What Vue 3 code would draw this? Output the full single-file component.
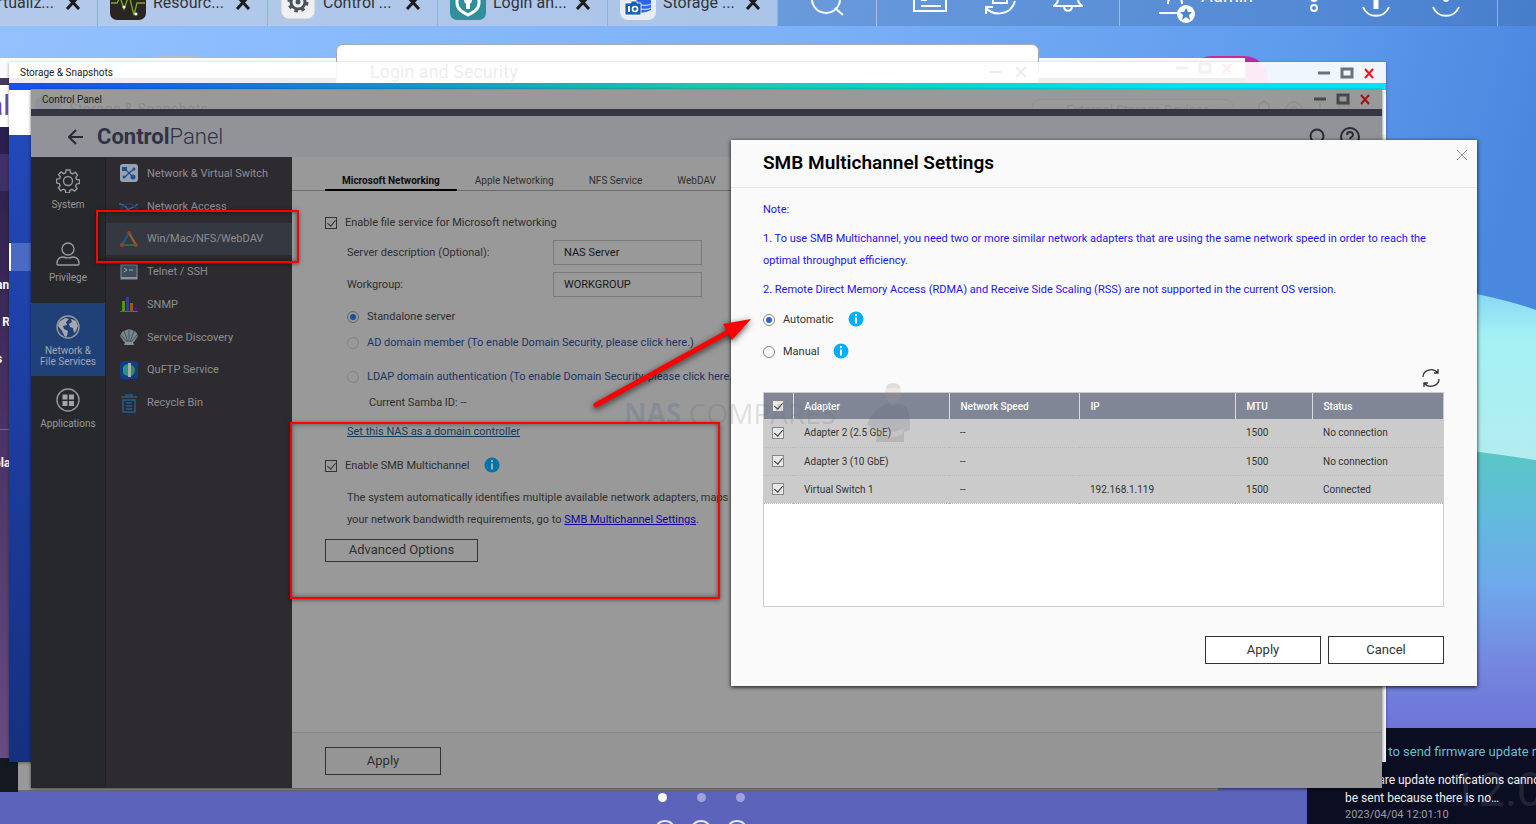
<template>
  <div class="desktop">
    <!-- Wallpaper -->
    <svg class="wallpaper" viewBox="0 0 1536 824" preserveAspectRatio="none" aria-hidden="true">
      <defs>
        <linearGradient id="sky" x1="0" y1="0" x2="1" y2="0.15">
          <stop offset="0" stop-color="#93c1ff" />
          <stop offset="0.5" stop-color="#7db2f8" />
          <stop offset="0.85" stop-color="#5d9aec" />
          <stop offset="1" stop-color="#4a87df" />
        </linearGradient>
        <linearGradient id="ice" x1="0" y1="0" x2="0" y2="1">
          <stop offset="0" stop-color="#7fd0f4" />
          <stop offset="0.3" stop-color="#a4f1f4" />
          <stop offset="1" stop-color="#b4ecef" />
        </linearGradient>
        <linearGradient id="sea" x1="0" y1="0" x2="0" y2="1">
          <stop offset="0" stop-color="#57c9c2" />
          <stop offset="0.2" stop-color="#62bbdc" />
          <stop offset="0.38" stop-color="#6fa8ec" />
          <stop offset="0.6" stop-color="#7585de" />
          <stop offset="0.8" stop-color="#6a70d4" />
          <stop offset="1" stop-color="#5f63c3" />
        </linearGradient>
      </defs>
      <rect width="1536" height="824" fill="url(#sky)" />
      <path d="M1380 280 Q1480 290 1536 310 V470 H1380Z" fill="url(#ice)" />
      <path d="M0 440 H1380 Q1470 450 1536 460 V824 H0Z" fill="url(#sea)" />
      <path d="M0 780 H1310 V824 H0Z" fill="#5c63ba" />
    </svg>
    <div class="shortcut shortcut-gray"></div>
    <div class="shortcut shortcut-pink"></div>

    <!-- Task bar -->
    <header class="taskbar">
      <div class="task" v-for="t in tasks" :key="t.name">
        <svg class="task-icon" viewBox="0 0 36 36" aria-hidden="true">
          <template v-if="t.icon === 'monitor'">
            <rect width="36" height="36" rx="7" fill="#2a2422" />
            <path d="M1 19h6l3-6 4 12 5-14 5 20 3-12h8" fill="none" stroke="#79a829" stroke-width="1.3" />
            <circle cx="14" cy="23" r="1.5" fill="#fff" />
            <circle cx="26" cy="30" r="1.5" fill="#fff" />
          </template>
          <template v-else-if="t.icon === 'gear'">
            <rect x="1" y="1" width="34" height="34" rx="8" fill="#eef0f3" stroke="#c9c9c9" />
            <circle cx="18" cy="18" r="7" fill="none" stroke="#4b525d" stroke-width="3" />
            <circle cx="18" cy="18" r="9" fill="none" stroke="#4b525d" stroke-width="3" stroke-dasharray="3.5 3.57" />
            <circle cx="18" cy="18" r="2.5" fill="#4b525d" />
          </template>
          <template v-else-if="t.icon === 'shield'">
            <rect width="36" height="36" rx="7" fill="#2f8f9b" />
            <path d="M18 4l11 3v12c0 6-5 9-11 12-6-3-11-6-11-12V7z" fill="none" stroke="#fff" stroke-width="3" />
            <circle cx="18" cy="16" r="4" fill="#fff" />
            <path d="M16 16h4v9h-4z" fill="#fff" />
          </template>
          <template v-else-if="t.icon === 'storage'">
            <rect width="36" height="36" rx="8" fill="#e8ecf2" />
            <path d="M16 2h15v24q-7 4-15 2z" fill="#2d63e8" />
            <path d="M18 20q7 3 13 0M18 24q7 3 13 0" fill="none" stroke="#a9d0ff" stroke-width="1.3" />
            <path d="M5 19h6v-2h6v2h4v12H5z" fill="#1261b5" stroke="#fff" stroke-width="0.8" />
            <path d="M9 22v6" stroke="#fff" stroke-width="2" />
            <circle cx="15" cy="25" r="2.5" fill="none" stroke="#fff" stroke-width="1.7" />
          </template>
        </svg>
        <span class="task-name">{{ t.name }}</span>
        <button class="plain" aria-label="Close">
          <svg width="16" height="16" viewBox="0 0 16 16"><path d="M2 2l12 13M14 2L2 15" stroke="#1c1c1c" stroke-width="3" /></svg>
        </button>
      </div>
      <nav class="tray">
        <button class="plain tray-search" aria-label="Search">
          <svg width="36" height="32" viewBox="0 0 36 32"><circle cx="17" cy="13" r="14" /><path d="M26 22l8 7" /></svg>
        </button>
        <i class="tray-line"></i>
        <div class="tray-group">
          <button class="plain" aria-label="Tasks">
            <svg width="34" height="24" viewBox="0 0 34 24"><path d="M1 0v22h32V0M8 11h6M8 17h20" /></svg>
          </button>
          <button class="plain" aria-label="Backup">
            <svg width="34" height="26" viewBox="0 0 34 26"><path d="M3 25v-7h7M3 19c7 8 25 8 29-7M10 8v6h14V8M13 10h6" /></svg>
          </button>
          <button class="plain" aria-label="Notifications">
            <svg width="30" height="24" viewBox="0 0 30 24"><path d="M5 8c0 6-1 6-4 9h28c-3-3-4-3-4-9M11 18c1 5 7 5 8 0" /></svg>
          </button>
        </div>
        <i class="tray-line"></i>
        <button class="plain user">
          <svg width="40" height="42" viewBox="0 0 40 42">
            <path d="M0 18q2-3 4-3M12 23q0-8 7-8t7 8M3 32h18" />
            <circle cx="30" cy="33" r="9" fill="#fff" stroke="none" />
            <path d="M30 27l2 4h4l-3 3 1 5-4-3-4 3 1-5-3-3h4z" fill="#4b85d0" stroke="none" />
          </svg>
          <span>Admin</span>
        </button>
        <button class="plain more" aria-label="More">
          <svg width="10" height="22" viewBox="0 0 10 22"><circle cx="5" cy="7" r="3" /><circle cx="5" cy="17" r="3" /></svg>
        </button>
        <button class="plain round" aria-label="Information">
          <svg width="30" height="30" viewBox="0 0 30 30"><path d="M2 20a14 14 0 0 0 26 0" /><path d="M15 8v14" stroke-width="5" /></svg>
        </button>
        <button class="plain round" aria-label="Dashboard">
          <svg width="30" height="30" viewBox="0 0 30 30"><path d="M2 20a14 14 0 0 0 26 0" /><circle cx="15" cy="12" r="2" fill="#fff" /></svg>
        </button>
        <i class="tray-line"></i>
      </nav>
    </header>

    <!-- Windows in the background -->
    <section class="back-window">
      <div class="back-title"><WindowButtons /></div>
      <div class="back-logo">al</div>
      <div class="back-side"><span>an</span><span>l R</span><span>s</span></div>
      <div class="back-side-low"><span>plan</span></div>
      <div class="back-foot"></div>
    </section>
    <section class="shade-window"></section>
    <section class="login-window">
      <h2>Login and Security</h2>
      <svg width="40" height="14" viewBox="0 0 40 14" aria-hidden="true"><path d="M1 7h13M28 2l10 10M38 2L28 12" /></svg>
    </section>

    <section class="notice">
      <span class="clock">12:01</span>
      <strong>Unable to send firmware update n</strong>
      <p>Firmware update notifications cannot<br>be sent because there is no…</p>
      <time>2023/04/04 12:01:10</time>
    </section>

    <footer class="pager">
      <div class="dots"><i class="on"></i><i></i><i></i></div>
      <div class="rings"><i></i><i></i><i></i></div>
    </footer>

    <!-- Storage & Snapshots -->
    <section class="storage-window">
      <div class="titlebar storage-title">
        <span>Storage &amp; Snapshots</span>
        <WindowButtons />
      </div>
      <div class="rainbow"></div>
      <div class="storage-head">
        <i class="disk"></i>
        <h2>Storage &amp; Snapshots</h2>
        <span class="device">External Storage Devices</span>
        <svg width="110" height="24" viewBox="0 0 110 24" aria-hidden="true">
          <path d="M17 8l5-4 5 4v12H17zM98 4l4 5 6-3-3 7 3 6H96zM78 4v18" /><circle cx="52" cy="13" r="8" /><circle cx="52" cy="13" r="3" />
        </svg>
      </div>
      <div class="storage-side"><i></i></div>
    </section>

    <!-- Control Panel -->
    <section class="panel">
      <div class="titlebar panel-title">
        <span>Control Panel</span>
        <WindowButtons />
      </div>
      <div class="panel-head">
        <button class="plain" aria-label="Back">
          <svg width="16" height="16" viewBox="0 0 16 16"><path d="M15 8H2M8 1L1 8l7 7" /></svg>
        </button>
        <h1><b>Control</b>Panel</h1>
        <button class="plain" aria-label="Search">
          <svg width="18" height="18" viewBox="0 0 18 18"><circle cx="8" cy="8" r="6.5" /><path d="M12 12l5 5" /></svg>
        </button>
        <button class="plain" aria-label="Help">
          <svg width="20" height="20" viewBox="0 0 20 20"><circle cx="10" cy="10" r="9" /><path d="M7 8c0-4 6-4 6 0 0 2-3 2-3 4M10 14v2" /></svg>
        </button>
      </div>
      <div class="panel-body">
        <nav class="groups">
          <a v-for="g in groups" :key="g.icon" href="#" :class="{ active: g.icon === 'globe' }">
            <svg width="24" height="24" viewBox="0 0 24 24" aria-hidden="true">
              <template v-if="g.icon === 'gear'">
                <path d="M10 1h4l.6 3 2 .9L19.300 3.200 21.500 6l-1.700 2.500.7 2 3 .5v3.500l-3 .6-1 2 1.600 2.500-2.600 2.500-2.500-1.700-2 .9-.6 2.700h-3.500l-.7-3-2-.8-2.500 1.600L2.500 19l1.600-2.500-.8-2-2.800-.6v-3.500l3-.7.8-2L2.500 5.500 5 3l2.500 1.700 2-.8z" />
                <circle cx="12" cy="12" r="4.500" />
              </template>
              <template v-else-if="g.icon === 'user'">
                <circle cx="12" cy="7" r="6" />
                <path d="M1 22c0-5 3-7 6-7 3 1 7 1 10 0 3 0 6 2 6 7q0 1-1 1H2q-1 0-1-1z" />
              </template>
              <template v-else-if="g.icon === 'globe'">
                <circle cx="12" cy="12" r="11" />
                <path d="M3 7l6-4 4 1-3 3 1 3-4 1 1 3 4 2-1 5-2 1-3-6-4-5zM15 4l5 2 2 5-2 5-2 2-1-5-3-1-1-3 3-2z" fill="#a5a8ae" stroke="none" />
              </template>
              <template v-else>
                <circle cx="12" cy="12" r="11" />
                <path d="M6.500 6.500h5v5h-5zM13 6.500h5v5h-5zM6.500 13h5v5h-5zM13 13h5v5h-5z" fill="#a4a4a6" stroke="none" />
              </template>
            </svg>
            <span>{{ g.name }}</span>
          </a>
        </nav>
        <nav class="services">
          <a v-for="s in services" :key="s.name" href="#" :class="{ active: s.icon === 'share' }">
            <svg width="20" height="20" viewBox="0 0 20 20" aria-hidden="true">
              <template v-if="s.icon === 'switch'">
                <rect x="1" y="1" width="18" height="18" rx="3" fill="#98a1ae" />
                <path d="M6 6l8 8M6 14l4-4M15 6l-5 4" stroke="#1f4f96" stroke-width="1.200" />
                <path d="M3 4h5v4H3z" fill="#1f4f96" /><circle cx="14" cy="14" r="2.500" fill="#1f4f96" /><circle cx="5" cy="14" r="1.500" fill="#1f4f96" /><circle cx="15" cy="6" r="1.500" fill="#1f4f96" />
              </template>
              <template v-else-if="s.icon === 'access'">
                <path d="M0 8q6 0 10 7M0 15Q10 15 19 8" fill="none" stroke="#2d6d8b" stroke-width="1.500" />
                <path d="M1 14Q8 5 14 9l5 5" fill="none" stroke="#353675" stroke-width="1.500" />
              </template>
              <template v-else-if="s.icon === 'share'">
                <path d="M10 4L3 16" stroke="#205891" stroke-width="2" /><path d="M10 4l7 12" stroke="#98661e" stroke-width="2" /><path d="M3 16h14" stroke="#2e6544" stroke-width="2" />
                <circle cx="10" cy="4" r="2" fill="#98412c" /><circle cx="3" cy="16" r="2" fill="#98412c" /><circle cx="17" cy="16" r="2" fill="#98412c" />
              </template>
              <template v-else-if="s.icon === 'terminal'">
                <rect x="2" y="3" width="16" height="14" fill="#3d4d5c" stroke="#7c8d9c" /><path d="M5 6l3 2-3 2M10 8h4" fill="none" stroke="#a0a8b0" /><path d="M2 15h16v2H2z" fill="#87929b" />
              </template>
              <template v-else-if="s.icon === 'bars'">
                <path d="M3 7h3v10H3z" fill="#539700" /><path d="M7 3h3v14H7z" fill="#303f99" /><path d="M11 9h3v8h-3z" fill="#985d00" /><path d="M15 13h3v4h-3z" fill="#551296" /><path d="M1 17h18v1H1z" fill="#666" />
              </template>
              <template v-else-if="s.icon === 'shell'">
                <path d="M1 9l2-4 4-2 3-1 3 1 4 2 2 4-4 6H5z" fill="#75878d" /><path d="M10 2v13M5 4l4 11M15 4l-4 11M2 8l6 7M18 8l-6 7" stroke="#47575f" /><path d="M6 15h8l1 3H5z" fill="#839095" />
              </template>
              <template v-else-if="s.icon === 'ftp'">
                <rect x="1" y="1" width="18" height="18" rx="3" fill="#123d80" /><path d="M4 7q2-3 5-3v12q-3 0-5-3z" fill="#299291" /><path d="M9 3h3v14H9z" fill="#9eb2a9" /><path d="M12 5q4 1 4 5t-4 6z" fill="#328b65" />
              </template>
              <template v-else>
                <path d="M2 4h16M7 4V2h6v2M4 7v12h12V7zM7 10h6M7 13h6M7 16h6" fill="none" stroke="#245d87" stroke-width="1.500" />
              </template>
            </svg>
            <span>{{ s.name }}</span>
          </a>
        </nav>
        <main class="content">
          <div class="tabs" role="tablist">
            <button v-for="(t, i) in tabs" :key="t" class="tab" :class="{ active: i === 0 }" role="tab">{{ t }}</button>
          </div>
          <form class="form" @submit.prevent>
            <label class="line"><input v-model="fileService" type="checkbox">Enable file service for Microsoft networking</label>
            <div class="field">
              <label for="desc">Server description (Optional):</label>
              <input id="desc" v-model="description" type="text">
            </div>
            <div class="field">
              <label for="workgroup">Workgroup:</label>
              <input id="workgroup" v-model="workgroup" type="text">
            </div>
            <div class="modes">
              <label class="line"><input v-model="mode" type="radio" name="mode" value="standalone">Standalone server</label>
              <label class="line domain"><input v-model="mode" type="radio" name="mode" value="ad">AD domain member (To enable Domain Security, please click here.)</label>
              <label class="line domain ldap"><input v-model="mode" type="radio" name="mode" value="ldap">LDAP domain authentication (To enable Domain Security, please click here.)</label>
              <p class="samba">Current Samba ID: --</p>
              <a class="controller" href="#">Set this NAS as a domain controller</a>
            </div>
            <div class="multi">
              <label class="line"><input v-model="multichannel" type="checkbox">Enable SMB Multichannel</label>
              <InfoIcon />
            </div>
            <p class="hint">The system automatically identifies multiple available network adapters, maps<br>your network bandwidth requirements, go to <a href="#">SMB Multichannel Settings</a>.</p>
            <button class="btn advanced">Advanced Options</button>
          </form>
          <div class="panel-foot"><button class="btn">Apply</button></div>
        </main>
      </div>
    </section>

    <!-- Dialog -->
    <section class="dialog" role="dialog" aria-labelledby="dialog-title">
      <div class="dialog-head">
        <h2 id="dialog-title">SMB Multichannel Settings</h2>
        <button class="plain" aria-label="Close">
          <svg width="12" height="12" viewBox="0 0 12 12"><path d="M1 1l10 10M11 1L1 11" stroke="#999" /></svg>
        </button>
      </div>
      <div class="dialog-body">
        <div class="note">
          <p>Note:</p>
          <p>1. To use SMB Multichannel, you need two or more similar network adapters that are using the same network speed in order to reach the optimal throughput efficiency.</p>
          <p>2. Remote Direct Memory Access (RDMA) and Receive Side Scaling (RSS) are not supported in the current OS version.</p>
        </div>
        <div class="choice">
          <label class="line"><input v-model="assign" type="radio" name="assign" value="auto">Automatic</label>
          <InfoIcon />
        </div>
        <div class="choice">
          <label class="line"><input v-model="assign" type="radio" name="assign" value="manual">Manual</label>
          <InfoIcon />
        </div>
        <div class="tools">
          <button class="plain" aria-label="Refresh">
            <svg width="18" height="20" viewBox="0 0 18 20"><path d="M1 9C1 2 11-1 16 5M16 1v4h-4M17 11c0 7-10 10-15 4M2 19v-4h4" fill="none" stroke="#333" stroke-width="1.300" /></svg>
          </button>
        </div>
        <div class="grid">
          <table>
            <colgroup><col class="c-check"><col class="c-name"><col class="c-speed"><col class="c-ip"><col class="c-mtu"><col></colgroup>
            <thead>
              <tr>
                <th><input type="checkbox" checked aria-label="Select all"></th>
                <th>Adapter</th>
                <th>Network Speed</th>
                <th>IP</th>
                <th>MTU</th>
                <th>Status</th>
              </tr>
            </thead>
            <tbody>
              <tr v-for="a in adapters" :key="a.name">
                <td><input type="checkbox" checked :aria-label="a.name"></td>
                <td>{{ a.name }}</td>
                <td>--</td>
                <td>{{ a.ip }}</td>
                <td>{{ a.mtu }}</td>
                <td>{{ a.status }}</td>
              </tr>
            </tbody>
          </table>
        </div>
        <div class="actions">
          <button class="btn">Apply</button>
          <button class="btn">Cancel</button>
        </div>
      </div>
    </section>

    <!-- Watermark and markers -->
    <div class="watermark">
      <span><b>NAS</b> COMPARES</span>
      <svg width="46" height="60" viewBox="0 0 46 60" aria-hidden="true">
        <ellipse cx="27" cy="10" rx="8" ry="10" fill="#b99a8c" />
        <path d="M20 6q0-6 7-6t8 6q-7-3-15 0z" fill="#666" />
        <path d="M22 20q5 5 10 0l9 5q4 10 3 22l-6 2v10H10l2-12-11-5q5-15 20-22z" fill="#555d6a" />
        <path d="M2 43l24 6 12-3-2 6-12 3-22-7z" fill="#b99a8c" />
      </svg>
    </div>
    <div class="marker marker-menu"></div>
    <div class="marker marker-option"></div>
    <svg class="arrow" width="180" height="110" viewBox="0 0 180 110" aria-hidden="true">
      <path d="M16 95L150 21" stroke="#f00" stroke-width="5" stroke-linecap="round" />
      <path d="M171 9l-28 5 9 16z" fill="#f00" />
    </svg>
  </div>
</template>

<script setup>
import { h, ref } from 'vue'

const tasks = [
  { name: 'Virtualiz...', icon: 'vm' },
  { name: 'Resourc...', icon: 'monitor' },
  { name: 'Control ...', icon: 'gear' },
  { name: 'Login an...', icon: 'shield' },
  { name: 'Storage ...', icon: 'storage' }
]

const groups = [
  { name: 'System', icon: 'gear' },
  { name: 'Privilege', icon: 'user' },
  { name: 'Network &\nFile Services', icon: 'globe' },
  { name: 'Applications', icon: 'apps' }
]

const services = [
  { name: 'Network & Virtual Switch', icon: 'switch' },
  { name: 'Network Access', icon: 'access' },
  { name: 'Win/Mac/NFS/WebDAV', icon: 'share' },
  { name: 'Telnet / SSH', icon: 'terminal' },
  { name: 'SNMP', icon: 'bars' },
  { name: 'Service Discovery', icon: 'shell' },
  { name: 'QuFTP Service', icon: 'ftp' },
  { name: 'Recycle Bin', icon: 'bin' }
]

const tabs = ['Microsoft Networking', 'Apple Networking', 'NFS Service', 'WebDAV']

const adapters = [
  { name: 'Adapter 2 (2.5 GbE)', ip: '', mtu: 1500, status: 'No connection' },
  { name: 'Adapter 3 (10 GbE)', ip: '', mtu: 1500, status: 'No connection' },
  { name: 'Virtual Switch 1', ip: '192.168.1.119', mtu: 1500, status: 'Connected' }
]

const fileService = ref(true)
const description = ref('NAS Server')
const workgroup = ref('WORKGROUP')
const mode = ref('standalone')
const multichannel = ref(true)
const assign = ref('auto')

// Minimize / maximize / close
const WindowButtons = () => h('svg', { class: 'win-buttons', width: 58, height: 14, viewBox: '0 0 58 14' }, [
  h('path', { class: 'win-line', d: 'M1 7h12M25 3h10v8H25z' }),
  h('path', { class: 'win-close', d: 'M48 3l8 9M56 3l-8 9' })
])

const InfoIcon = () => h('svg', { class: 'info', width: 16, height: 16, viewBox: '0 0 16 16' }, [
  h('circle', { cx: 8, cy: 8, r: 7.5 }),
  h('path', { d: 'M8 3v2M8 6.5v6' })
])
</script>

<style>
body {
  margin: 0;
  overflow: hidden;
}

.win-buttons path {
  fill: none;
  stroke: #6d7178;
  stroke-width: 3;
}

.win-buttons .win-close {
  stroke: #f01818;
  stroke-width: 2;
}

.info {
  margin-bottom: 2px;
}

.info circle {
  fill: #00aefc;
}

.info path {
  stroke: #fff;
  stroke-width: 2;
}
</style>

<style scoped>
.desktop {
  position: relative;
  height: 100vh;
  overflow: hidden;
  font-family: Roboto, "Liberation Sans", sans-serif;
  font-size: 11px;
  color: #333;
}

.desktop *,
.desktop *::after {
  box-sizing: border-box;
}

h1, h2, p {
  margin: 0;
  font-weight: 400;
}

a {
  color: inherit;
  text-decoration: none;
}

button,
input {
  margin: 0;
  font: inherit;
  color: inherit;
}

.plain {
  display: flex;
  padding: 0;
  border: 0;
  background: none;
}

/* ─── Wallpaper ─── */
.wallpaper {
  position: absolute;
  inset: 0;
  width: 100%;
  height: 100%;
}

.shortcut {
  position: absolute;
  top: 56px;
  width: 80px;
  height: 80px;
  border-radius: 24px;
}

.shortcut-gray {
  left: 138px;
  background: #b7b9bd;
}

.shortcut-pink {
  right: 268px;
  background: #c42a9b;
}

/* ─── Task bar ─── */
.taskbar {
  position: relative;
  display: flex;
  height: 48px;
  margin: -22px 0 0 -72px;
  background: rgba(60, 100, 155, 0.3);
}

.task {
  display: flex;
  align-items: center;
  gap: 7px;
  width: 170px;
  padding: 0 16px 0 12px;
  border-right: 1px solid #86b2ea;
  background: rgba(232, 236, 243, 0.52);
  flex-shrink: 0;
}

.task-icon {
  width: 36px;
  height: 36px;
}

.task-name {
  flex: 1;
  font-size: 16px;
  white-space: nowrap;
}

.tray {
  display: flex;
  flex: 1;
  align-items: center;
}

.tray svg {
  fill: none;
  stroke: #fff;
  stroke-width: 2;
}

.tray-search {
  justify-content: center;
  width: 98px;
}

.tray-line {
  width: 1px;
  height: 48px;
  background: rgba(255, 255, 255, 0.4);
}

.tray-group {
  display: flex;
  gap: 36px;
  padding: 0 36px;
}

.user {
  align-items: center;
  gap: 5px;
  padding-left: 36px;
  font-size: 18px;
  color: #fff;
}

.user span {
  line-height: 28px;
  padding-bottom: 12px;
}

.more {
  margin: 0 2px 0 auto;
}

.round {
  margin-left: 40px;
}

.round:last-of-type {
  margin-right: 36px;
}

.tray .tray-line:last-child {
  margin-right: 38px;
}

/* ─── Background windows ─── */
.back-window {
  position: absolute;
  inset: 58px 291px 32px 0;
  display: flex;
  flex-direction: column;
}

.back-title {
  display: flex;
  justify-content: flex-end;
  height: 20px;
  padding: 3px 12px 0 0;
  background: #f8fafe;
}

.back-logo {
  height: 49px;
  border-top: 7px solid #443a5e;
  background: #fff;
  font-size: 28px;
  line-height: 42px;
  text-indent: -12px;
  color: #6745a3;
}

.back-side {
  display: flex;
  flex-direction: column;
  gap: 21px;
  height: 303px;
  padding-top: 150px;
  background: linear-gradient(#2b1f50 0 27px, #40306a 27px 64px, #30224f 64px, #4a3366);
  border-bottom: 1px solid #79648f;
  font-size: 12px;
  line-height: 16px;
  font-weight: 700;
  color: #fff;
}

.back-side span {
  text-indent: -4px;
}

.back-side-low {
  flex: 1;
  padding-top: 26px;
  background: linear-gradient(#4a3366, #664c80);
  font-size: 12px;
  font-weight: 700;
  color: #fff;
  text-indent: -6px;
}

.back-foot {
  width: 50%;
  height: 34px;
  background: #141821;
}

.shade-window {
  position: absolute;
  inset: 120px 318px 32px 18px;
  background: #999;
  border-bottom: 2px solid #6c6c76;
}

.login-window {
  position: absolute;
  left: 336px;
  right: 497px;
  top: 44px;
  display: flex;
  justify-content: space-between;
  height: 60px;
  padding: 13px 10px 0 33px;
  border: 1px solid #a5aab0;
  border-radius: 7px;
  background: #fff;
}

.login-window h2 {
  font-size: 18px;
  line-height: 28px;
}

.login-window svg {
  height: 28px;
  fill: none;
  stroke: #333;
  stroke-width: 2;
}

.notice {
  position: absolute;
  left: calc(100% - 229px);
  right: 0;
  bottom: 0;
  display: flex;
  flex-direction: column;
  height: 96px;
  padding: 14px 0 0 38px;
  overflow: hidden;
  background: #0b0e22;
  font-size: 12px;
  color: #f0f0f0;
  white-space: nowrap;
}

.notice strong {
  margin-bottom: 9px;
  font-size: 13px;
  font-weight: 400;
  line-height: 20px;
  color: #6dbccb;
}

.notice p {
  line-height: 18px;
}

.notice time {
  font-size: 11px;
  line-height: 16px;
  color: #9d9d9f;
}

.clock {
  position: absolute;
  left: 144px;
  top: 36px;
  font-size: 48px;
  line-height: 52px;
  color: rgba(255, 255, 255, 0.1);
}

.pager {
  position: absolute;
  left: 0;
  right: 134px;
  top: calc(100% - 31px);
  display: flex;
  flex-direction: column;
  align-items: center;
  gap: 18px;
}

.dots,
.rings {
  display: flex;
  gap: 30px;
}

.dots i {
  width: 9px;
  height: 9px;
  border-radius: 50%;
  background: #a1a1dc;
}

.dots .on {
  background: #fff;
}

.rings {
  gap: 14px;
}

.rings i {
  width: 22px;
  height: 22px;
  border: 2px solid #e4e4fa;
  border-radius: 50%;
}

/* ─── Storage & Snapshots ─── */
.storage-window {
  position: absolute;
  inset: 62px 150px 62px 9px;
  display: flex;
  flex-direction: column;
  box-shadow: 0 1px 3px rgba(0, 0, 0, 0.4);
}

.titlebar {
  display: flex;
  align-items: center;
  justify-content: space-between;
  flex-shrink: 0;
  padding: 0 11px;
  font-size: 10px;
  color: #1c1c1c;
}

.storage-title {
  height: 21px;
  background: rgba(255, 255, 255, 0.91);
}

.rainbow {
  height: 7px;
  background: linear-gradient(90deg, #1550f0 2%, #18c9ae 50%, #00e3f5 85%);
}

.storage-head {
  display: flex;
  gap: 8px;
  height: 45px;
  padding: 7px 34px 0 26px;
  background: #fff;
}

.storage-head h2 {
  flex: 1;
  font-size: 15px;
  line-height: 24px;
}

.disk {
  width: 26px;
  height: 20px;
  border-radius: 6px;
  background: #7aa0f5;
}

.device {
  width: 202px;
  height: 28px;
  margin-top: 2px;
  padding-left: 33px;
  border: 1px solid #888;
  border-radius: 8px;
  font-size: 13px;
  line-height: 20px;
}

.storage-head svg {
  fill: none;
  stroke: #777;
  stroke-width: 2;
}

.storage-side {
  flex: 1;
  padding-top: 108px;
  border-right: 4px solid #f4f4f4;
  background: linear-gradient(#2249ba, #15307f);
}

.storage-side i {
  display: block;
  width: 30px;
  height: 28px;
  border-left: 2px solid #fff;
  background: #4b6ac4;
}

/* ─── Control Panel ─── */
.panel {
  position: absolute;
  inset: 89px 154px 36px 31px;
  display: flex;
  flex-direction: column;
  box-shadow: 0 1px 3px rgba(0, 0, 0, 0.6);
}

.panel-title {
  height: 20px;
  background: rgba(145, 145, 145, 0.93);
}

.panel-title :deep(.win-line) {
  stroke: #45484d;
}

.panel-title :deep(.win-close) {
  stroke: #9c1414;
}

.panel-head {
  display: flex;
  align-items: center;
  gap: 13px;
  height: 48px;
  padding: 0 22px 0 37px;
  border-top: 7px solid #343644;
  background: #929398;
}

.panel-head svg {
  fill: none;
  stroke: #292a34;
  stroke-width: 2;
}

.panel-head h1 {
  flex: 1;
  font-size: 22px;
  font-weight: 300;
  color: #303245;
}

.panel-head h1 b {
  font-weight: 700;
}

.panel-body {
  display: flex;
  flex: 1;
  min-height: 0;
  background: linear-gradient(90deg, #2d2b30 261px, #999 261px);
}

.groups {
  width: 75px;
  border-right: 1px solid #202225;
  background: #26282b;
}

.groups a {
  display: flex;
  flex-direction: column;
  align-items: center;
  gap: 6px;
  height: 73px;
  padding: 12px 4px 0;
  font-size: 10px;
  line-height: 11px;
  text-align: center;
  white-space: pre-line;
  color: #98989a;
}

.groups svg {
  flex-shrink: 0;
  fill: none;
  stroke: #98989a;
  stroke-width: 1.4;
}

.groups .active {
  background: #204178;
  color: #a3a8b1;
}

.services {
  display: grid;
  grid-template-rows: repeat(8, 1fr);
  width: 186px;
  height: 262px;
  flex-shrink: 0;
}

.services a {
  display: flex;
  align-items: center;
  gap: 8px;
  padding-left: 13px;
  color: #8e8e90;
}

.services .active {
  background: #343840;
}

.content {
  display: flex;
  flex: 1;
  flex-direction: column;
  min-width: 0;
  color: #2f2f2f;
}

.tabs {
  display: flex;
  gap: 1px;
  height: 34px;
  padding-left: 33px;
  border-bottom: 1px solid #6c6c6c;
}

.tab {
  height: 34px;
  padding: 16px 17px 0;
  border: 0;
  border-bottom: 2px solid transparent;
  background: none;
  font-size: 10px;
  line-height: 16px;
}

.tab.active {
  border-bottom-color: #000;
  font-weight: 700;
  color: #0c0c0c;
}

.form {
  flex: 1;
  padding: 24px 0 0 33px;
  white-space: nowrap;
}

.line {
  display: flex;
  align-items: center;
  gap: 8px;
  line-height: 16px;
}

input[type="checkbox"],
input[type="radio"] {
  position: relative;
  width: 12px;
  height: 12px;
  flex-shrink: 0;
  appearance: none;
  border: 1px solid #333;
}

input[type="checkbox"]:checked::after {
  content: "";
  position: absolute;
  left: 3px;
  top: 0;
  width: 5px;
  height: 8px;
  border: solid #333;
  border-width: 0 1px 1px 0;
  transform: rotate(40deg);
}

input[type="radio"] {
  border-color: #666;
  border-radius: 50%;
}

input[type="radio"]:checked::after {
  content: "";
  position: absolute;
  inset: 2px;
  border-radius: 50%;
  background: #1d4fa0;
}

.field {
  display: flex;
  align-items: center;
  height: 25px;
  margin-top: 7px;
  padding-left: 22px;
}

.form > .line + .field {
  margin-top: 9px;
}

.field label {
  width: 206px;
}

.field input {
  width: 149px;
  height: 25px;
  padding: 0 10px;
  border: 1px solid #7a7a7a;
  background: none;
  color: #181818;
}

.modes {
  display: flex;
  flex-direction: column;
  align-items: flex-start;
  gap: 10px;
  padding: 12px 0 0 22px;
}

.domain {
  color: #1b3463;
}

.domain input[type="radio"] {
  border-color: #858585;
}

.ldap {
  margin-top: 8px;
}

.samba {
  padding-left: 22px;
  line-height: 16px;
}

.controller {
  margin-top: 3px;
  line-height: 16px;
  color: #153b58;
  text-decoration: underline;
}

.multi,
.choice {
  display: flex;
  align-items: center;
  gap: 14px;
}

.multi {
  margin-top: 17px;
}

.multi :deep(circle) {
  fill: #0073a8;
}

.multi :deep(path) {
  stroke: #aaa;
}

.hint {
  padding: 12px 0 8px 22px;
  line-height: 22px;
}

.hint a {
  color: #1403a0;
  text-decoration: underline;
}

.btn {
  width: 116px;
  height: 28px;
  padding: 0 0 2px;
  border: 1px solid #333;
  background: none;
  font-size: 13px;
}

.advanced {
  width: 153px;
  height: 23px;
}

.panel-foot {
  height: 56px;
  padding: 14px 33px 0;
  border-top: 1px solid #888;
  background: #959595;
}

/* ─── Dialog ─── */
.dialog {
  position: absolute;
  left: 731px;
  right: 59px;
  top: 140px;
  background: #fafafa;
  box-shadow: 0 1px 4px rgba(0, 0, 0, 0.9);
}

.dialog-head {
  display: flex;
  align-items: flex-start;
  justify-content: space-between;
  height: 48px;
  padding: 9px 9px 0 32px;
  border-bottom: 1px solid #e6e6e6;
}

.dialog-head h2 {
  font-size: 19px;
  font-weight: 600;
  line-height: 28px;
  color: #000;
}

.dialog-body {
  padding: 11px 33px 22px 32px;
}

.note {
  line-height: 22px;
  color: #1c13f5;
}

.note p {
  margin-bottom: 7px;
}

.note p:last-child {
  margin-bottom: 3px;
}

.choice {
  height: 32px;
}

.dialog .choice input {
  border-color: #888;
}

.dialog .choice input::after {
  background: #2a66d2;
}

.tools {
  display: flex;
  justify-content: flex-end;
  height: 24px;
  padding: 0 4px;
}

.grid {
  height: 215px;
  border: 1px solid #ccc;
  background: #fff;
}

table {
  width: 100%;
  border-collapse: collapse;
  table-layout: fixed;
  font-size: 10px;
}

.c-check { width: 29px; }
.c-name { width: 156px; }
.c-speed { width: 130px; }
.c-ip { width: 156px; }
.c-mtu { width: 77px; }

th {
  height: 26px;
  padding: 0 0 0 11px;
  border-left: 1px solid #ddd;
  background: #808696;
  color: #fff;
  font-weight: 500;
  text-align: left;
}

td {
  height: 28px;
  padding: 0 0 0 11px;
  border-bottom: 1px dotted #b9b9b9;
  background: #cbcbcb;
}

th:first-child,
td:first-child {
  padding-left: 8px;
  border-left: 0;
}

table input[type="checkbox"] {
  display: block;
  border-color: #888;
  background: #e8e8e8;
}

.actions {
  display: flex;
  justify-content: flex-end;
  gap: 7px;
  padding-top: 29px;
}

.actions .btn {
  background: #fff;
}

/* ─── Watermark and markers ─── */
.watermark {
  position: absolute;
  left: 624px;
  top: 383px;
  display: flex;
  align-items: center;
  gap: 30px;
  font-family: "Open Sans", "Noto Sans", sans-serif;
  font-size: 28px;
  line-height: 30px;
  white-space: nowrap;
  color: #666;
  opacity: 0.18;
  pointer-events: none;
}

.watermark b {
  color: #3b5a8a;
}

.marker {
  position: absolute;
  border: 2px solid #f00;
  box-shadow: 0 1px 4px rgba(0, 0, 0, 0.5), inset 0 0 5px rgba(0, 0, 0, 0.5);
  pointer-events: none;
}

.marker-menu {
  left: 96px;
  top: 210px;
  width: 203px;
  height: 53px;
}

.marker-option {
  left: 290px;
  top: 422px;
  width: 430px;
  height: 177px;
}

.arrow {
  position: absolute;
  left: 580px;
  top: 310px;
  filter: drop-shadow(0 2px 3px rgba(0, 0, 0, 0.7));
  pointer-events: none;
}
</style>
